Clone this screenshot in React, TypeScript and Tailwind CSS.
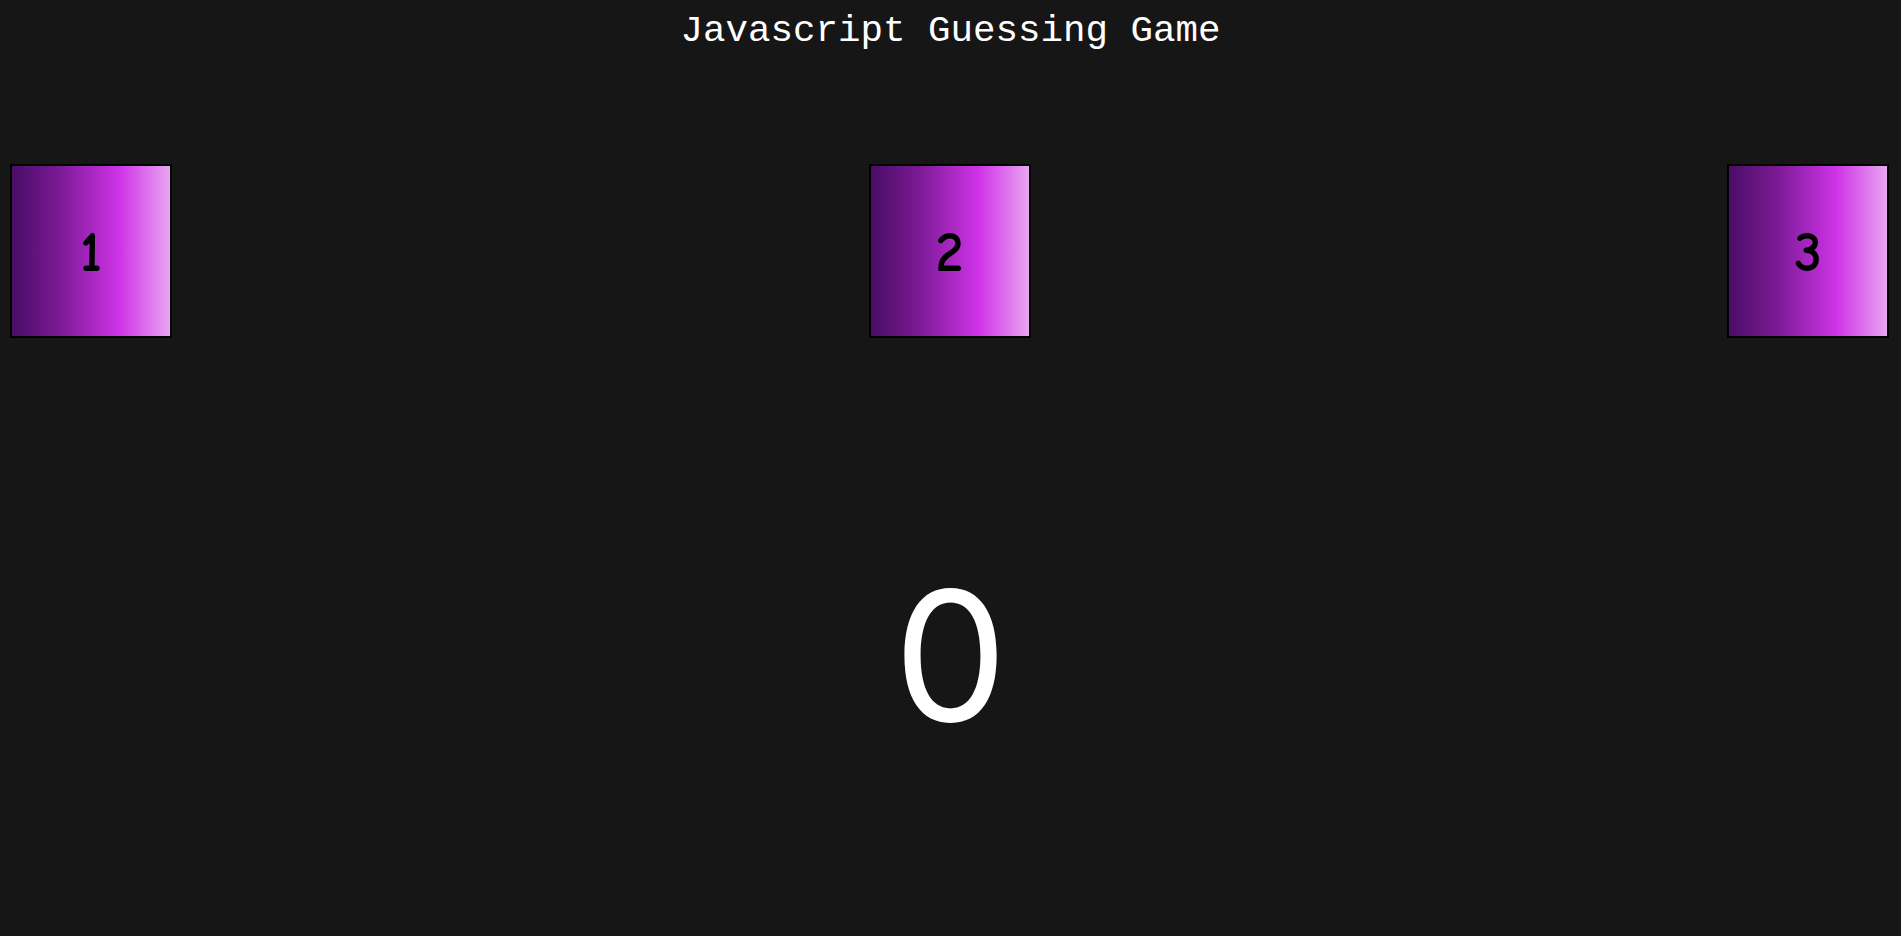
import React from "react";

const boxes = [1, 2, 3];

function GuessBox({ n }: { n: number }) {
  return (
    <div className="box-border w-[162px] h-[174px] border-2 border-black bg-[linear-gradient(to_right,#4a0d66_0%,#7a1a94_30%,#cf33e8_68%,#e8a6f0_100%)] flex items-center justify-center cursor-pointer">
      <span className="text-black text-[56px] font-bold leading-none pt-[4px] font-['Comic_Sans_MS','Comic_Neue','DejaVu_Sans',sans-serif]">
        {n}
      </span>
    </div>
  );
}

export default function App() {
  return (
    <div className="min-h-[936px] w-full bg-[#161616] flex flex-col">
      <h1 className="pt-[9px] text-center text-white text-[37.5px] leading-[44px] font-normal font-['Courier_New','Liberation_Mono',monospace]">
        Javascript Guessing Game
      </h1>
      <div className="mt-[111px] pl-[10px] pr-[12px] flex justify-between">
        {boxes.map((n) => (
          <GuessBox key={n} n={n} />
        ))}
      </div>
      <div className="mt-[228px] text-center text-white text-[180px] leading-none font-['Inter','Open_Sans',sans-serif]">
        0
      </div>
    </div>
  );
}
